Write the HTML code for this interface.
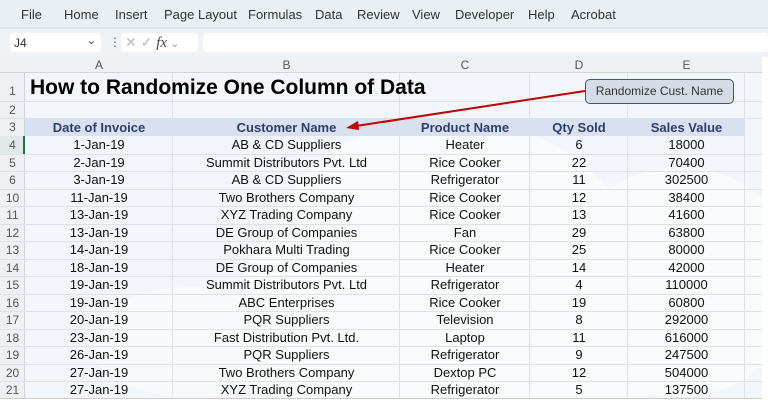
<!DOCTYPE html>
<html style="overflow:hidden"><head><meta charset="utf-8"><style>
*{margin:0;padding:0;box-sizing:border-box}
html,body{width:768px;height:402px;overflow:hidden}
body{background:#fff;font-family:"Liberation Sans",sans-serif;position:relative}
.abs{position:absolute}
.menu{left:0;top:0;width:768px;height:29px;background:#e9eff2;border-bottom:2px solid #dfe5e8}
.menu span{position:absolute;top:7px;font-size:13px;color:#333}
.fbar{left:0;top:29px;width:768px;height:28px;background:#eef2f4}
.sheet{left:0;top:57px;width:762px;height:342px;background:#f2f5f9;overflow:hidden;border-bottom:1px solid #ccc}
.colh{left:0;top:0;width:762px;height:16px;background:#eef1f4;border-bottom:1px solid #cfd4d8}
.colh div{position:absolute;top:1px;font-size:12px;color:#555;text-align:center}
.rowh{position:absolute;left:0;width:25px;font-size:12px;color:#555;text-align:center}
.cell{position:absolute;font-size:13px;color:#111;text-align:center;white-space:nowrap}
.hdr{font-weight:bold;color:#2e3e6a}
.circ{position:absolute;border-radius:50%;background:#fbfcfd}
</style></head><body>
<div class="abs menu">
<span style="left:21px">File</span><span style="left:64px">Home</span><span style="left:115px">Insert</span><span style="left:164px">Page Layout</span><span style="left:248px">Formulas</span><span style="left:315px">Data</span><span style="left:357px">Review</span><span style="left:412px">View</span><span style="left:455px">Developer</span><span style="left:528px">Help</span><span style="left:571px">Acrobat</span>
</div>
<div class="abs fbar">
<div class="abs" style="left:10px;top:4px;width:91px;height:19px;background:#fff;border-radius:4px;font-size:12px;padding:3px 4px;color:#333">J4<span style="position:absolute;right:5px;top:1px;font-size:11px">&#8964;</span></div>
<div class="abs" style="left:109px;top:6px;font-size:12px;color:#666">&#8942;</div>
<div class="abs" style="left:121px;top:4px;width:77px;height:19px;background:#fff;border-radius:4px;color:#bbb;font-size:14px;padding-left:4px;line-height:18px">&#10005; &#10003; <i style="font-family:'Liberation Serif',serif;color:#444;font-size:15px">fx</i><span style="font-size:11px;color:#999"> &#8964;</span></div>
<div class="abs" style="left:203px;top:4px;width:565px;height:19px;background:#fff;border-radius:4px"></div>
</div>
<div class="abs sheet">
<div class="circ" style="left:240px;top:60px;width:420px;height:420px;background:#f8fafc"></div>
<div class="circ" style="left:560px;top:110px;width:240px;height:230px;background:#f8fafc"></div>
<div class="circ" style="left:90px;top:230px;width:200px;height:110px;background:#f7f9fb"></div>
<div class="abs" style="left:25px;top:16px;width:737px;height:326px;
background-image:linear-gradient(to right,transparent 147px,#dde2e6 147px,#dde2e6 148px,transparent 148px,transparent 374px,#dde2e6 374px,#dde2e6 375px,transparent 375px,transparent 504px,#dde2e6 504px,#dde2e6 505px,transparent 505px,transparent 602px,#dde2e6 602px,#dde2e6 603px,transparent 603px,transparent 719px,#dde2e6 719px,#dde2e6 720px,transparent 720px);"></div>
<div class="colh abs">
<div style="left:25px;width:148px">A</div><div style="left:173px;width:227px">B</div><div style="left:400px;width:130px">C</div><div style="left:530px;width:98px">D</div><div style="left:628px;width:117px">E</div>
</div>
<div class="abs" style="left:0;top:16px;width:25px;height:326px;background:#eef1f4;border-right:1px solid #cfd4d8"></div>
<div class="abs" style="left:25px;top:61px;width:720px;height:18px;background:#d9e0ef"></div>
<div class="abs" style="left:0;top:79px;width:25px;height:18px;background:#e2e7ea;border-right:2px solid #217346"></div>
<div id="rows"></div>
<div class="cell" style="left:30px;top:19px;font-size:21px;font-weight:bold;text-align:left;color:#000">How to Randomize One Column of Data</div>
<div class="rowh" style="top:27px">1</div><div class="rowh" style="top:46px">2</div><div class="rowh" style="top:63px">3</div>
<div class="cell hdr" style="left:25px;width:148px;top:63px">Date of Invoice</div>
<div class="cell hdr" style="left:173px;width:227px;top:63px">Customer Name</div>
<div class="cell hdr" style="left:400px;width:130px;top:63px">Product Name</div>
<div class="cell hdr" style="left:530px;width:98px;top:63px">Qty Sold</div>
<div class="cell hdr" style="left:628px;width:117px;top:63px">Sales Value</div>
<div class="abs" style="left:585px;top:22px;width:149px;height:25px;background:#d6dce5;border:1.5px solid #44546a;border-radius:5px;font-size:12px;color:#333;text-align:center;line-height:22px">Randomize Cust. Name</div>
<svg class="abs" style="left:0;top:0" width="762" height="342"><line x1="585" y1="34" x2="356" y2="69" stroke="#c00000" stroke-width="2"/><polygon points="346,71 358,64 359,73" fill="#c00000"/></svg>
</div>
<script>
var d=[["4","1-Jan-19","AB & CD Suppliers","Heater","6","18000"],["5","2-Jan-19","Summit Distributors Pvt. Ltd","Rice Cooker","22","70400"],["6","3-Jan-19","AB & CD Suppliers","Refrigerator","11","302500"],["10","11-Jan-19","Two Brothers Company","Rice Cooker","12","38400"],["11","13-Jan-19","XYZ Trading Company","Rice Cooker","13","41600"],["12","13-Jan-19","DE Group of Companies","Fan","29","63800"],["13","14-Jan-19","Pokhara Multi Trading","Rice Cooker","25","80000"],["14","18-Jan-19","DE Group of Companies","Heater","14","42000"],["15","19-Jan-19","Summit Distributors Pvt. Ltd","Refrigerator","4","110000"],["16","19-Jan-19","ABC Enterprises","Rice Cooker","19","60800"],["17","20-Jan-19","PQR Suppliers","Television","8","292000"],["18","23-Jan-19","Fast Distribution Pvt. Ltd.","Laptop","11","616000"],["19","26-Jan-19","PQR Suppliers","Refrigerator","9","247500"],["20","27-Jan-19","Two Brothers Company","Dextop PC","12","504000"],["21","27-Jan-19","XYZ Trading Company","Refrigerator","5","137500"]];
var L=[25,173,400,530,628,745],h="";
h+='<div class="abs" style="left:0;top:44px;width:762px;border-top:1px solid #dde2e6"></div><div class="abs" style="left:0;top:61px;width:762px;border-top:1px solid #dde2e6"></div>';
for(var i=0;i<d.length;i++){var t=79+i*17.5;
if(i<14)h+='<div class="abs" style="left:0;top:'+(t+17.5)+'px;width:762px;border-top:1px solid #dde2e6"></div>';
h+='<div class="rowh" style="top:'+(t+2)+'px">'+d[i][0]+'</div>';
for(var j=1;j<6;j++)h+='<div class="cell" style="left:'+L[j-1]+'px;width:'+(L[j]-L[j-1])+'px;top:'+(t+1)+'px">'+d[i][j].replace("&","&amp;")+'</div>';}
document.getElementById("rows").outerHTML=h;
</script>
</body></html>
